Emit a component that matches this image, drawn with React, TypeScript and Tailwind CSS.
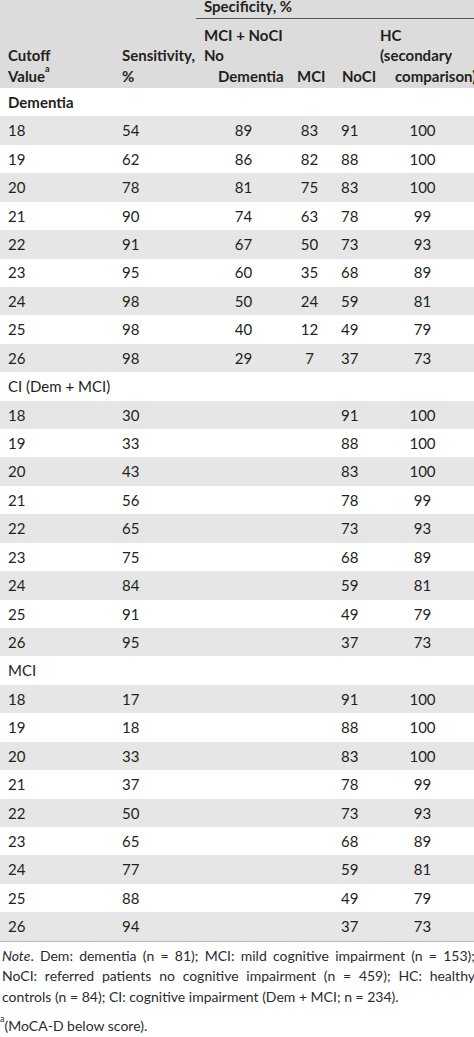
import React from "react";

type Row = [string, string, string, string, string, string];

const dementia: Row[] = [
  ["18", "54", "89", "83", "91", "100"],
  ["19", "62", "86", "82", "88", "100"],
  ["20", "78", "81", "75", "83", "100"],
  ["21", "90", "74", "63", "78", "99"],
  ["22", "91", "67", "50", "73", "93"],
  ["23", "95", "60", "35", "68", "89"],
  ["24", "98", "50", "24", "59", "81"],
  ["25", "98", "40", "12", "49", "79"],
  ["26", "98", "29", "7", "37", "73"],
];

const ci: Row[] = [
  ["18", "30", "", "", "91", "100"],
  ["19", "33", "", "", "88", "100"],
  ["20", "43", "", "", "83", "100"],
  ["21", "56", "", "", "78", "99"],
  ["22", "65", "", "", "73", "93"],
  ["23", "75", "", "", "68", "89"],
  ["24", "84", "", "", "59", "81"],
  ["25", "91", "", "", "49", "79"],
  ["26", "95", "", "", "37", "73"],
];

const mci: Row[] = [
  ["18", "17", "", "", "91", "100"],
  ["19", "18", "", "", "88", "100"],
  ["20", "33", "", "", "83", "100"],
  ["21", "37", "", "", "78", "99"],
  ["22", "50", "", "", "73", "93"],
  ["23", "65", "", "", "68", "89"],
  ["24", "77", "", "", "59", "81"],
  ["25", "88", "", "", "49", "79"],
  ["26", "94", "", "", "37", "73"],
];

const cols = "grid grid-cols-[114px_82px_95px_37px_44px_101px]";

function DataRow({ row, grey }: { row: Row; grey: boolean }) {
  return (
    <div className={`${cols} h-[28.43px] items-center ${grey ? "bg-[#e6e6e6]" : "bg-white"}`}>
      <div className="pl-2">{row[0]}</div>
      <div className="pl-2">{row[1]}</div>
      <div className="px-2 text-center">{row[2]}</div>
      <div className="text-center">{row[3]}</div>
      <div className="pl-[13px]">{row[4]}</div>
      <div className="px-2 text-center">{row[5]}</div>
    </div>
  );
}

function Section({ label, rows, bold }: { label: string; rows: Row[]; bold?: boolean }) {
  return (
    <>
      <div className={`h-[28.43px] flex items-center pl-2 bg-white ${bold ? "font-bold" : ""}`}>
        {label}
      </div>
      {rows.map((r, i) => (
        <DataRow key={label + r[0]} row={r} grey={i % 2 === 0} />
      ))}
    </>
  );
}

export default function App() {
  return (
    <div
      className="w-[474px] h-[1037px] overflow-hidden bg-white text-[#231f20] text-[15px]"
      style={{ fontFamily: "Lato, 'Noto Sans', sans-serif" }}
    >
      <div className="w-[482px]">
        {/* header */}
        <div className="bg-[#dcdcdc] h-[88px] font-bold leading-[20.5px] flex flex-col">
          <div className="flex h-[19px]">
            <div className="w-[196px]" />
            <div className="flex-1 border-b border-[#555] pl-2 -mt-[4px] h-[23px] leading-[20px]">
              Specificity, %
            </div>
          </div>
          <div className={`${cols} flex-1 items-end pb-[2px]`}>
            <div className="pl-2">
              Cutoff
              <br />
              Value<sup className="text-[9px] align-[5px] font-bold">a</sup>
            </div>
            <div className="pl-2 whitespace-nowrap">
              Sensitivity,
              <br />%
            </div>
            <div className="px-2 whitespace-nowrap">
              MCI + NoCI
              <br />
              No
              <br />
              <span className="pl-[14px]">Dementia</span>
            </div>
            <div className="pl-[6px]">MCI</div>
            <div className="pl-[14px]">NoCI</div>
            <div className="pl-2 whitespace-nowrap">
              HC
              <br />
              (secondary
              <br />
              <span className="pl-[15px]">comparison)</span>
            </div>
          </div>
        </div>

        {/* body */}
        <div className="border-b border-[#b8b8b8]">
          <Section label="Dementia" rows={dementia} bold />
          <Section label="CI (Dem + MCI)" rows={ci} />
          <Section label="MCI" rows={mci} />
        </div>

        {/* notes */}
        <div className="pt-[4px] leading-[20.5px] text-[#2b2b2b] text-[14px] w-[475px]">
          <p className="text-justify pl-[2px]">
            <i>Note</i>. Dem: dementia (n = 81); MCI: mild cognitive impairment (n = 153); NoCI:
            referred patients no cognitive impairment (n = 459); HC: healthy controls (n = 84);
            CI: cognitive impairment (Dem + MCI; n = 234).
          </p>
          <p className="mt-[9px]">
            <sup className="text-[9px] align-[5px]">a</sup>(MoCA-D below score).
          </p>
        </div>
      </div>
    </div>
  );
}
